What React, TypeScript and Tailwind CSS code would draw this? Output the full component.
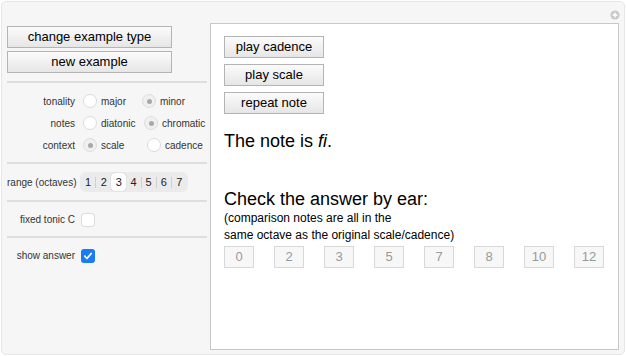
import React from "react";

const font = { fontFamily: '"Liberation Sans", Arial, sans-serif' };

function Radio({ checked }: { checked?: boolean }) {
  return (
    <span
      className={`flex h-[14px] w-[14px] shrink-0 items-center justify-center rounded-full border border-[#dcdcdc] ${
        checked ? "bg-[#f0f0f0]" : "bg-white"
      }`}
    >
      {checked && <span className="h-[5px] w-[5px] rounded-full bg-[#a8a8a8]" />}
    </span>
  );
}

function RadioRow({
  label,
  options,
  selected,
  firstWidth,
}: {
  label: string;
  options: string[];
  selected: number;
  firstWidth: string;
}) {
  return (
    <div className="flex h-[22px] items-center">
      <span className="w-[68px] text-right text-[10px] text-[#333]">{label}</span>
      <div className={`ml-[8px] flex items-center gap-[4px] ${firstWidth}`}>
        <Radio checked={selected === 0} />
        <span className="text-[10px] text-[#333]">{options[0]}</span>
      </div>
      <div className="flex items-center gap-[4px]">
        <Radio checked={selected === 1} />
        <span className="text-[10px] text-[#333]">{options[1]}</span>
      </div>
    </div>
  );
}

function Sep() {
  return <div className="h-[2px] w-[200px] bg-[#dedede]" />;
}

function MButton({ children, w }: { children: React.ReactNode; w: string }) {
  return (
    <div
      className={`flex h-[22px] ${w} items-center justify-center border border-[#b4b4b4] bg-gradient-to-b from-[#fbfbfb] to-[#e6e6e6] text-[13px] text-black`}
    >
      {children}
    </div>
  );
}

export default function App() {
  const ranges = [1, 2, 3, 4, 5, 6, 7];
  const answers = [0, 2, 3, 5, 7, 8, 10, 12];
  return (
    <div className="h-[356px] w-[626px] bg-white p-[1px]" style={font}>
      <div className="relative flex h-[354px] w-[624px] rounded-[5px] border border-[#e6e6e6] bg-[#f6f6f6]">
        {/* close/plus icon */}
        <svg className="absolute right-[4px] top-[8px]" width="10" height="10" viewBox="0 0 10 10">
          <circle cx="5" cy="5" r="4.6" fill="#c9c9c9" />
          <path d="M5 2.6v4.8M2.6 5h4.8" stroke="#fff" strokeWidth="1.4" />
        </svg>

        {/* Left controls */}
        <div className="flex w-[205px] shrink-0 flex-col pl-[5px] pt-[24px]">
          <div className="flex flex-col gap-[3px]">
            <MButton w="w-[165px]">change example type</MButton>
            <MButton w="w-[165px]">new example</MButton>
          </div>
          <div className="mt-[8px]">
            <Sep />
          </div>
          <div className="mt-[7px] flex flex-col">
            <RadioRow label="tonality" options={["major", "minor"]} selected={1} firstWidth="w-[59px]" />
            <RadioRow label="notes" options={["diatonic", "chromatic"]} selected={1} firstWidth="w-[61px]" />
            <RadioRow label="context" options={["scale", "cadence"]} selected={0} firstWidth="w-[64px]" />
          </div>
          <div className="mt-[6px]">
            <Sep />
          </div>
          <div className="mt-[8px] flex items-center">
            <span className="w-[68px] whitespace-nowrap text-right text-[10px] text-[#333]">range (octaves)</span>
            <div className="ml-[5px] flex h-[20px] w-[108px] items-center rounded-[6px] bg-[#ebebeb] px-[1px]">
              {ranges.map((r, i) => (
                <div key={r} className="flex flex-1 items-center">
                  <span
                    className={`flex h-[18px] flex-1 items-center justify-center text-[11px] text-[#222] ${
                      r === 3 ? "rounded-[4px] bg-white shadow-[0_0_1px_rgba(0,0,0,0.35)]" : ""
                    }`}
                  >
                    {r}
                  </span>
                  {i < ranges.length - 1 && r !== 2 && r !== 3 && (
                    <span className="h-[11px] w-[1px] bg-[#d0d0d0]" />
                  )}
                </div>
              ))}
            </div>
          </div>
          <div className="mt-[8px]">
            <Sep />
          </div>
          <div className="mt-[10px] flex items-center">
            <span className="w-[68px] text-right text-[10px] text-[#333]">fixed tonic C</span>
            <span className="ml-[6px] h-[14px] w-[14px] rounded-[3px] border border-[#dcdcdc] bg-white" />
          </div>
          <div className="mt-[9px]">
            <Sep />
          </div>
          <div className="mt-[10px] flex items-center">
            <span className="w-[68px] text-right text-[10px] text-[#333]">show answer</span>
            <span className="ml-[6px] flex h-[14px] w-[14px] items-center justify-center rounded-[3px] bg-[#1a7cf5]">
              <svg width="10" height="10" viewBox="0 0 10 10">
                <path d="M1.8 5.2l2.2 2.3 4.2-5" fill="none" stroke="#fff" strokeWidth="1.7" strokeLinecap="round" strokeLinejoin="round" />
              </svg>
            </span>
          </div>
        </div>

        {/* Right output panel */}
        <div className="mb-[4px] ml-[3px] mt-[21px] flex h-[327px] w-[409px] flex-col border border-[#c8c8c8] bg-white pl-[13px] pt-[12px]">
          <div className="flex flex-col gap-[6px]">
            <MButton w="w-[100px]">play cadence</MButton>
            <MButton w="w-[100px]">play scale</MButton>
            <MButton w="w-[100px]">repeat note</MButton>
          </div>
          <div className="mt-[16px] text-[18px] leading-[22px] text-black">
            The note is <i>fi</i>.
          </div>
          <div className="mt-[36px] text-[18px] leading-[22px] text-black">Check the answer by ear:</div>
          <div className="text-[12px] leading-[17px] text-black">
            (comparison notes are all in the
            <br />
            same octave as the original scale/cadence)
          </div>
          <div className="mt-[2px] flex gap-[20px]">
            {answers.map((a) => (
              <div
                key={a}
                className="flex h-[22px] w-[30px] items-center justify-center border border-[#d8d8d8] bg-[#f7f7f7] text-[13px] text-[#999]"
              >
                {a}
              </div>
            ))}
          </div>
        </div>
      </div>
    </div>
  );
}
